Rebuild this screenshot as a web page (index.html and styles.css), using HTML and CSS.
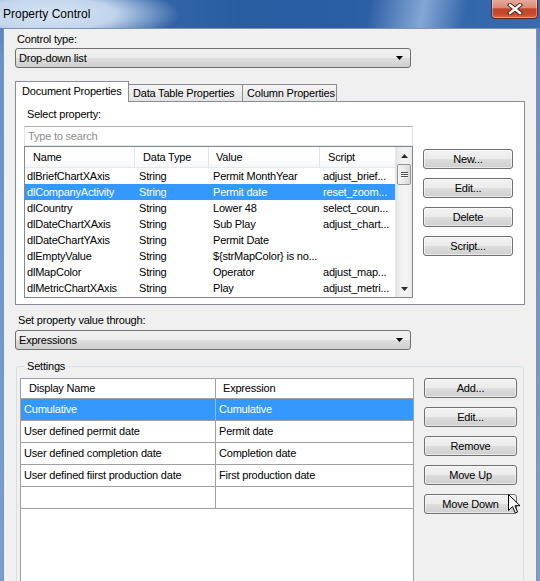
FILE: index.html
```html
<!DOCTYPE html>
<html>
<head>
<meta charset="utf-8">
<title>Property Control</title>
<link rel="stylesheet" href="styles.css">
</head>
<body>
<div class="window">
  <div class="titlebar">
    <span class="title">Property Control</span>
    <div class="close">
      <svg width="16" height="12" viewBox="0 0 16 12">
        <path d="M3 2 L13 10 M13 2 L3 10" stroke="#4a1a12" stroke-width="4.2" stroke-linecap="square" fill="none"/>
        <path d="M3 2 L13 10 M13 2 L3 10" stroke="#ffffff" stroke-width="2.4" stroke-linecap="square" fill="none"/>
      </svg>
    </div>
  </div>
  <div class="client">
    <div class="label lbl-control">Control type:</div>
    <div class="combo combo-control">
      <span>Drop-down list</span>
      <svg class="drop" width="7" height="4" viewBox="0 0 7 4"><path d="M0 0 H7 L3.5 4 Z" fill="#000"/></svg>
    </div>

    <div class="tabs">
      <div class="tab active">Document Properties</div>
      <div class="tab tab-dt">Data Table Properties</div>
      <div class="tab tab-col">Column Properties</div>
    </div>
    <div class="panel">
      <div class="panel-left">
        <div class="label lbl-select">Select property:</div>
        <div class="search">Type to search</div>
        <div class="list">
          <div class="list-main">
            <div class="lrow lhead"><div>Name</div><div>Data Type</div><div>Value</div><div>Script</div></div>
            <div class="lrow"><div>dlBriefChartXAxis</div><div>String</div><div>Permit MonthYear</div><div>adjust_brief...</div></div>
            <div class="lrow sel"><div>dlCompanyActivity</div><div>String</div><div>Permit date</div><div>reset_zoom...</div></div>
            <div class="lrow"><div>dlCountry</div><div>String</div><div>Lower 48</div><div>select_coun...</div></div>
            <div class="lrow"><div>dlDateChartXAxis</div><div>String</div><div>Sub Play</div><div>adjust_chart...</div></div>
            <div class="lrow"><div>dlDateChartYAxis</div><div>String</div><div>Permit Date</div><div></div></div>
            <div class="lrow"><div>dlEmptyValue</div><div>String</div><div class="span2">${strMapColor} is no...</div></div>
            <div class="lrow"><div>dlMapColor</div><div>String</div><div>Operator</div><div>adjust_map...</div></div>
            <div class="lrow"><div>dlMetricChartXAxis</div><div>String</div><div>Play</div><div>adjust_metri...</div></div>
          </div>
          <div class="vscroll">
            <div class="sb-btn"><svg width="7" height="4" viewBox="0 0 7 4"><path d="M3.5 0 L7 4 H0 Z" fill="#2b2b2b"/></svg></div>
            <div class="sb-thumb"><span></span><span></span><span></span></div>
            <div class="sb-track"></div>
            <div class="sb-btn"><svg width="7" height="4" viewBox="0 0 7 4"><path d="M0 0 H7 L3.5 4 Z" fill="#2b2b2b"/></svg></div>
          </div>
        </div>
      </div>
      <div class="btncol btncol-top">
        <div class="btn">New...</div>
        <div class="btn">Edit...</div>
        <div class="btn">Delete</div>
        <div class="btn">Script...</div>
      </div>
    </div>

    <div class="label lbl-set">Set property value through:</div>
    <div class="combo combo-set">
      <span>Expressions</span>
      <svg class="drop" width="7" height="4" viewBox="0 0 7 4"><path d="M0 0 H7 L3.5 4 Z" fill="#000"/></svg>
    </div>

    <fieldset class="group">
      <legend>Settings</legend>
      <div class="group-body">
        <div class="grid">
          <div class="grow ghead"><div>Display Name</div><div>Expression</div></div>
          <div class="grow gsel"><div>Cumulative</div><div>Cumulative</div></div>
          <div class="grow"><div>User defined permit date</div><div>Permit date</div></div>
          <div class="grow"><div>User defined completion date</div><div>Completion date</div></div>
          <div class="grow"><div>User defined fiirst production date</div><div>First production date</div></div>
          <div class="grow"><div></div><div></div></div>
        </div>
        <div class="btncol btncol-bottom">
          <div class="btn btn-b">Add...</div>
          <div class="btn btn-b">Edit...</div>
          <div class="btn btn-b">Remove</div>
          <div class="btn btn-b">Move Up</div>
          <div class="btn btn-b">Move Down</div>
        </div>
      </div>
    </fieldset>
  </div>

  <svg class="cursor" width="13" height="21" viewBox="0 0 13 21">
    <path d="M0.5 0.5 V16.5 L4.5 12.6 L7.3 19 L9.6 18 L6.9 11.7 H12 Z" fill="#ffffff" stroke="#000" stroke-width="1" stroke-linejoin="miter"/>
  </svg>
</div>
</body>
</html>
```

FILE: styles.css
```css
* { box-sizing: border-box; }

html, body {
  margin: 0;
  padding: 0;
}

body {
  width: 540px;
  height: 581px;
  overflow: hidden;
  font-family: "Liberation Sans", Arial, sans-serif;
  font-size: 11px;
  letter-spacing: -0.2px;
  color: #000;
  background: #5b86bf;
}

.window {
  position: relative;
  width: 540px;
  height: 581px;
  display: flex;
  flex-direction: column;
  overflow: hidden;
  background: linear-gradient(to bottom, #4a78b6 0px, #6a92c6 60px, #7a9fcf 581px);
}

/* ---------- title bar ---------- */
.titlebar {
  flex: none;
  height: 28px;
  display: flex;
  justify-content: space-between;
  align-items: flex-start;
  background:
    radial-gradient(ellipse 130px 32px at 50px 14px, rgba(214,228,244,1) 0%, rgba(200,218,239,0.95) 50%, rgba(170,198,231,0.0) 100%),
    linear-gradient(100deg, rgba(255,255,255,0) 0%, rgba(255,255,255,0) 68%, rgba(160,190,228,0.75) 78%, rgba(255,255,255,0) 86%),
    linear-gradient(to right, #5a86c1 0%, #3566a9 25%, #2a5ca2 45%, #2c5ea5 65%, #3467ab 90%, #3a6bae 100%);
}

.title {
  font-size: 12px;
  line-height: 12px;
  letter-spacing: 0;
  margin: 8px 0 0 3px;
  color: #000;
}

.close {
  width: 47px;
  height: 20px;
  margin: -1px 2px 0 0;
  border: 1px solid #5a2a22;
  border-top: none;
  border-radius: 0 0 4px 4px;
  background: linear-gradient(to bottom, #e7ad9f 0%, #d98a78 45%, #c4442a 52%, #c9492c 80%, #d86a4e 100%);
  box-shadow: inset 0 0 0 1px rgba(255,255,255,0.35);
  display: flex;
  align-items: center;
  justify-content: center;
}

/* ---------- client area ---------- */
.client {
  flex: 1;
  min-height: 0;
  margin: 0 3px;
  border: 1px solid #7d93b0;
  border-bottom: none;
  background: #f0f0f0;
  padding: 0 11px;
  overflow: hidden;
}

.label {
  height: 12px;
  line-height: 12px;
  white-space: nowrap;
}

.lbl-control { margin: 4px 0 0 2px; }
.lbl-select  { margin: 0 0 0 3px; }
.lbl-set     { margin: 9px 0 0 3px; }

.combo {
  width: 396px;
  height: 20px;
  border: 1px solid #707070;
  border-radius: 3px;
  background: linear-gradient(to bottom, #f2f2f2 0%, #ebebeb 50%, #dddddd 51%, #cfcfcf 100%);
  display: flex;
  align-items: center;
  justify-content: space-between;
  padding: 0 3px 0 3px;
  line-height: 18px;
}

.combo .drop { margin-right: 4px; }

.combo-control { margin-top: 3px; }
.combo-set { margin-top: 4px; }

/* ---------- tabs ---------- */
.tabs {
  margin-top: 13px;
  height: 20px;
  display: flex;
  align-items: flex-end;
}

.tab {
  height: 17px;
  line-height: 16px;
  border: 1px solid #898c95;
  border-bottom: none;
  background: linear-gradient(to bottom, #f4f4f4, #e4e4e4);
  padding-left: 4px;
  white-space: nowrap;
  margin-left: -1px;
}

.tab.active {
  position: relative;
  z-index: 1;
  height: 21px;
  margin-bottom: -1px;
  margin-left: 0;
  background: #ffffff;
  padding-left: 6px;
  line-height: 18px;
  width: 114px;
}

.tab-dt { width: 115px; }
.tab-col { width: 95px; }

.panel {
  height: 204px;
  border: 1px solid #898c95;
  background: #ffffff;
  display: flex;
  gap: 10px;
  padding: 6px 0 6px 8px;
}

.panel-left {
  width: 389px;
  display: flex;
  flex-direction: column;
}

.search {
  margin-top: 6px;
  height: 20px;
  border: 1px solid;
  border-color: #abadb3 #dbdfe6 #e3e9ef #e2e3ea;
  color: #8d8d8d;
  padding-left: 3px;
  line-height: 18px;
}

.list {
  height: 152px;
  border: 1px solid #828790;
  display: flex;
  background: #fff;
}

.list-main {
  width: 370px;
  overflow: hidden;
}

.lrow {
  display: grid;
  grid-template-columns: 110px 74px 111px 75px;
  height: 16px;
  line-height: 16px;
  white-space: nowrap;
}

.lrow > div {
  overflow: hidden;
  padding-left: 4px;
}

.lrow > div:first-child { padding-left: 2px; }
.lrow > div:nth-child(4) { padding-left: 3px; }

.lrow .span2 {
  grid-column: span 2;
  overflow: visible;
}

.lhead {
  height: 21px;
  line-height: 20px;
  background: linear-gradient(to bottom, #ffffff 0%, #ffffff 50%, #f6f7f9 100%);
  border-bottom: 1px solid #e7e9ed;
}

.lhead > div {
  border-right: 1px solid #e3e5e9;
  padding-left: 8px !important;
}

.lhead > div:nth-child(3) { padding-left: 7px !important; }
.lhead > div:nth-child(4) { border-right: none; }

.lrow.sel {
  background: #3399ff;
  color: #ffffff;
}

.vscroll {
  width: 17px;
  display: flex;
  flex-direction: column;
  background: linear-gradient(to right, #e2e2e2 0%, #efefef 20%, #f3f3f3 60%, #ececec 100%);
  border-left: 1px solid #e6e6e6;
}

.sb-btn {
  height: 17px;
  display: flex;
  align-items: center;
  justify-content: center;
}

.sb-thumb {
  height: 21px;
  margin: 0 1px;
  border: 1px solid #959595;
  border-radius: 2px;
  background: linear-gradient(to right, #f3f3f3 0%, #e9e9e9 50%, #d8d8d8 100%);
  display: flex;
  flex-direction: column;
  justify-content: center;
  align-items: center;
  gap: 1px;
}

.sb-thumb span {
  width: 7px;
  height: 1px;
  background: #4e4e4e;
  box-shadow: 0 1px 0 #f8f8f8;
}

.sb-track { flex: 1; }

/* ---------- buttons ---------- */
.btncol {
  display: flex;
  flex-direction: column;
  gap: 9px;
}

.btncol-top { margin-top: 41px; }

.btn {
  width: 90px;
  height: 20px;
  border: 1px solid #707070;
  border-radius: 3px;
  background: linear-gradient(to bottom, #f2f2f2 0%, #ebebeb 50%, #dddddd 51%, #cfcfcf 100%);
  box-shadow: inset 0 0 0 1px rgba(255,255,255,0.55);
  text-align: center;
  line-height: 18px;
  white-space: nowrap;
}

.btn-b { width: 93px; }

/* ---------- settings group ---------- */
.group {
  margin: 10px 1px 0 1px;
  padding: 6px 6px 0 3px;
  border: 1px solid #d5dfe5;
  border-radius: 3px;
  min-width: 0;
  height: 340px;
}

.group legend {
  margin-left: 5px;
  padding: 0 2px;
  line-height: 12px;
  height: 12px;
}

.group-body {
  display: flex;
  gap: 10px;
}

.grid {
  width: 394px;
  height: 320px;
  border: 1px solid #a0a0a0;
  background: #ffffff;
}

.grow {
  display: grid;
  grid-template-columns: 195px 197px;
  height: 22px;
  line-height: 21px;
  border-bottom: 1px solid #a0a0a0;
  white-space: nowrap;
}

.grow > div {
  padding-left: 3px;
  overflow: hidden;
}

.grow > div:first-child {
  border-right: 1px solid #a0a0a0;
}

.ghead {
  height: 20px;
  line-height: 19px;
}

.ghead > div:first-child { padding-left: 8px; }
.ghead > div:last-child { padding-left: 7px; }

.gsel > div {
  background: #3399ff;
  color: #ffffff;
}

.gsel > div:first-child { border-right-color: #8fc3f5; }

/* ---------- mouse pointer ---------- */
.cursor {
  position: absolute;
  left: 508px;
  top: 494px;
}
```
